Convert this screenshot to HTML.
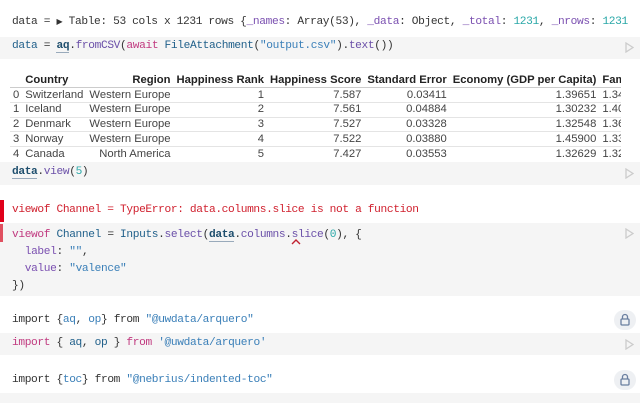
<!DOCTYPE html>
<html><head><meta charset="utf-8"><style>
*{margin:0;padding:0;box-sizing:border-box}
body{width:640px;height:400px;overflow:hidden;background:#fff;position:relative;font-family:"Liberation Mono",monospace;font-size:11.2px;letter-spacing:-0.36px;color:#333}
.a{position:absolute;white-space:pre}
.cell{position:absolute;left:0;width:640px;background:#f5f5f5}
.k{color:#c0397f}.f{color:#6a4fa8}.s{color:#3a7fb8}.n{color:#2aa8a8}.v{color:#1f5f8a}.p{color:#7a4fb0}
.u{border-bottom:1px solid #9ab;font-weight:bold;color:#1f4f6e}
.play{position:absolute;right:6px;width:9px;height:11px}
table{position:absolute;border-collapse:collapse;font-family:"Liberation Sans",sans-serif;font-size:11.25px;letter-spacing:0;color:#444}
td,th{height:14.7px;padding:0 3px;white-space:nowrap;text-align:right;border-bottom:1px solid #e4e4e4;line-height:13px}
th{font-weight:bold;color:#222;border-bottom:1px solid #ccc}
.l{text-align:left}
.lock{position:absolute;left:614px;width:22px;height:20px;border-radius:10px;background:#eef0f3}
</style></head><body>
<div class="a" style="left:12px;top:16px">data = <span style="font-size:8px">▶</span> Table: 53 cols x 1231 rows {<span class="p">_names</span>: Array(53), <span class="p">_data</span>: Object, <span class="p">_total</span>: <span class="n">1231</span>, <span class="p">_nrows</span>: <span class="n">1231</span></div>
<div class="cell" style="top:37px;height:22px"></div>
<div class="a" style="left:12px;top:40px"><span class="v">data</span> = <span class="u">aq</span>.<span class="f">fromCSV</span>(<span class="k">await</span> <span class="v">FileAttachment</span>(<span class="s">"output.csv"</span>).<span class="f">text</span>())</div>
<svg class="play" style="top:42px" viewBox="0 0 9 11"><path d="M1 1L8 5.5L1 10Z" fill="none" stroke="#ccc" stroke-width="1.3"/></svg>
<div style="position:absolute;left:0;top:64px;width:621px;height:98px;overflow:hidden">
<table style="left:10px;top:9px">
<tr><th></th><th class="l">Country</th><th>Region</th><th>Happiness Rank</th><th>Happiness Score</th><th>Standard Error</th><th>Economy (GDP per Capita)</th><th class="l">Family</th></tr>
<tr><td>0</td><td class="l">Switzerland</td><td>Western Europe</td><td>1</td><td>7.587</td><td>0.03411</td><td>1.39651</td><td class="l">1.34951</td></tr>
<tr><td>1</td><td class="l">Iceland</td><td>Western Europe</td><td>2</td><td>7.561</td><td>0.04884</td><td>1.30232</td><td class="l">1.40223</td></tr>
<tr><td>2</td><td class="l">Denmark</td><td>Western Europe</td><td>3</td><td>7.527</td><td>0.03328</td><td>1.32548</td><td class="l">1.36058</td></tr>
<tr><td>3</td><td class="l">Norway</td><td>Western Europe</td><td>4</td><td>7.522</td><td>0.03880</td><td>1.45900</td><td class="l">1.33095</td></tr>
<tr><td style="border:0">4</td><td class="l" style="border:0">Canada</td><td style="border:0">North America</td><td style="border:0">5</td><td style="border:0">7.427</td><td style="border:0">0.03553</td><td style="border:0">1.32629</td><td class="l" style="border:0">1.32261</td></tr>
</table></div>
<div class="cell" style="top:162px;height:23px"></div>
<div class="a" style="left:12px;top:166px"><span class="u">data</span>.<span class="f">view</span>(<span class="n">5</span>)</div>
<svg class="play" style="top:168px" viewBox="0 0 9 11"><path d="M1 1L8 5.5L1 10Z" fill="none" stroke="#ccc" stroke-width="1.3"/></svg>
<div style="position:absolute;left:0;top:200px;width:4px;height:22px;background:#e0001a"></div>
<div class="a" style="left:12px;top:204px;color:#d0202e">viewof Channel = TypeError: data.columns.slice is not a function</div>
<div class="cell" style="top:223px;height:73px"></div>
<div style="position:absolute;left:0;top:224px;width:3px;height:18px;background:#e05060"></div>
<div class="a" style="left:12px;top:227px;line-height:17px"><span class="k">viewof</span> <span class="v">Channel</span> = <span class="v">Inputs</span>.<span class="f">select</span>(<span class="u">data</span>.<span class="f">columns</span>.<span class="f">slice</span>(<span class="n">0</span>), {
  <span class="p">label</span>: <span class="s">""</span>,
  <span class="p">value</span>: <span class="s">"valence"</span>
})</div>
<svg class="a" style="left:291px;top:239px" width="10" height="6"><path d="M1 5L5 1L9 5" fill="none" stroke="#c02030" stroke-width="1.4"/></svg>
<svg class="play" style="top:228px" viewBox="0 0 9 11"><path d="M1 1L8 5.5L1 10Z" fill="none" stroke="#ccc" stroke-width="1.3"/></svg>
<div class="a" style="left:12px;top:314px">import {<span class="s">aq</span>, <span class="s">op</span>} from <span class="s">"@uwdata/arquero"</span></div>
<div class="lock" style="top:310px"></div>
<svg class="a" style="left:620px;top:313px" width="10" height="13"><path d="M2.5 6V4a2.5 2.5 0 0 1 5 0V6" fill="none" stroke="#6a7fa0" stroke-width="1.3"/><rect x="1" y="6" width="8" height="6" rx="1" fill="none" stroke="#6a7fa0" stroke-width="1.3"/></svg>
<div class="cell" style="top:333px;height:22px"></div>
<div class="a" style="left:12px;top:337px"><span class="k">import</span> { <span class="v">aq</span>, <span class="v">op</span> } <span class="k">from</span> <span class="s">'@uwdata/arquero'</span></div>
<svg class="play" style="top:339px" viewBox="0 0 9 11"><path d="M1 1L8 5.5L1 10Z" fill="none" stroke="#ccc" stroke-width="1.3"/></svg>
<div class="a" style="left:12px;top:374px">import {<span class="s">toc</span>} from <span class="s">"@nebrius/indented-toc"</span></div>
<div class="lock" style="top:370px"></div>
<svg class="a" style="left:620px;top:373px" width="10" height="13"><path d="M2.5 6V4a2.5 2.5 0 0 1 5 0V6" fill="none" stroke="#6a7fa0" stroke-width="1.3"/><rect x="1" y="6" width="8" height="6" rx="1" fill="none" stroke="#6a7fa0" stroke-width="1.3"/></svg>
<div class="cell" style="top:393px;height:10px"></div>
</body></html>
